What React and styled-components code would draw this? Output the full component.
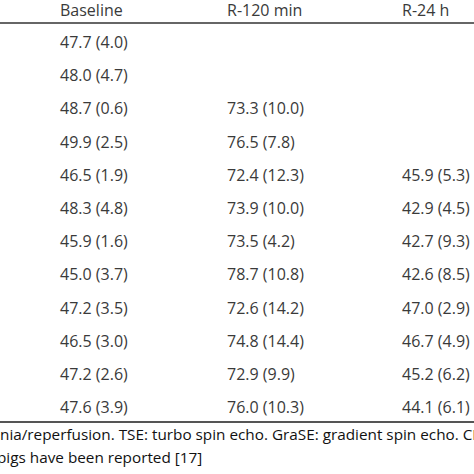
import React from 'react';
import styled, { createGlobalStyle } from 'styled-components';

const GlobalStyle = createGlobalStyle`
  html, body {
    margin: 0;
    padding: 0;
    background: #fff;
    overflow: hidden;
  }
  body {
    font-family: "Open Sans", "DejaVu Sans", sans-serif;
  }
`;

const Page = styled.div`
  width: 474px;
  height: 474px;
  overflow: hidden;
`;

const Table = styled.div`
  display: grid;
  grid-template-columns: 60px 167px 175px 72px;
  font-size: 16px;
  color: #3a3a3a;
`;

const HeadCell = styled.div`
  height: 22px;
  line-height: 20px;
  white-space: nowrap;
  border-bottom: 2px solid #666;
`;

const Cell = styled.div`
  height: 33.2px;
  line-height: 37px;
  white-space: nowrap;
  ${p => p.last && 'border-bottom: 2px solid #555; height: 32px;'}
`;

const Footnote = styled.div`
  font-size: 15.3px;
  color: #111;
  line-height: 23px;
  white-space: nowrap;
`;

const FootLine = styled.div`
  margin-left: ${p => p.shift || 0}px;
`;

const rows = [
  ['47.7 (4.0)', '', ''],
  ['48.0 (4.7)', '', ''],
  ['48.7 (0.6)', '73.3 (10.0)', ''],
  ['49.9 (2.5)', '76.5 (7.8)', ''],
  ['46.5 (1.9)', '72.4 (12.3)', '45.9 (5.3)'],
  ['48.3 (4.8)', '73.9 (10.0)', '42.9 (4.5)'],
  ['45.9 (1.6)', '73.5 (4.2)', '42.7 (9.3)'],
  ['45.0 (3.7)', '78.7 (10.8)', '42.6 (8.5)'],
  ['47.2 (3.5)', '72.6 (14.2)', '47.0 (2.9)'],
  ['46.5 (3.0)', '74.8 (14.4)', '46.7 (4.9)'],
  ['47.2 (2.6)', '72.9 (9.9)', '45.2 (6.2)'],
  ['47.6 (3.9)', '76.0 (10.3)', '44.1 (6.1)'],
];

export default function App() {
  return (
    <Page>
      <GlobalStyle />
      <Table>
        <HeadCell />
        <HeadCell>Baseline</HeadCell>
        <HeadCell>R-120 min</HeadCell>
        <HeadCell>R-24 h</HeadCell>
        {rows.map((r, i) => {
          const last = i === rows.length - 1;
          return (
            <React.Fragment key={i}>
              <Cell last={last} />
              <Cell last={last}>{r[0]}</Cell>
              <Cell last={last}>{r[1]}</Cell>
              <Cell last={last}>{r[2]}</Cell>
            </React.Fragment>
          );
        })}
      </Table>
      <Footnote>
        <FootLine shift={0}>nia/reperfusion. TSE: turbo spin echo. GraSE: gradient spin echo. CMR</FootLine>
        <FootLine shift={-3}>pigs have been reported [17]</FootLine>
      </Footnote>
    </Page>
  );
}
